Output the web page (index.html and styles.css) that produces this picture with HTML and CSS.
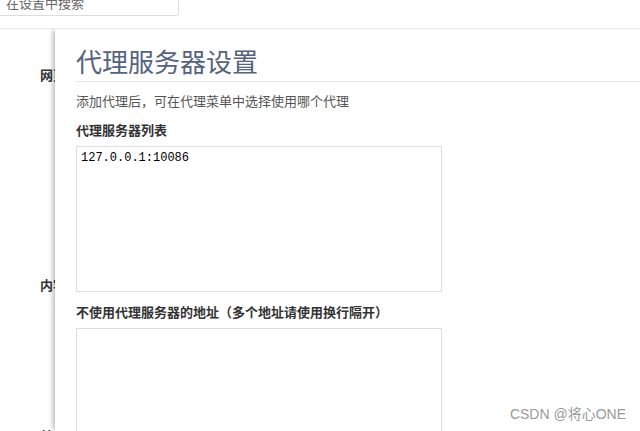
FILE: index.html
```html
<!DOCTYPE html>
<html lang="zh-CN">
<head>
  <meta charset="UTF-8">
  <meta name="viewport" content="width=device-width, initial-scale=1.0">
  <title>代理服务器设置</title>
  <link rel="stylesheet" href="styles.css">
</head>
<body>
  <div class="topbar">
    <div class="search">在设置中搜索</div>
  </div>

  <div class="main">
    <div class="settings">
      <div class="row row-web">网页</div>
      <div class="row row-content">内容</div>
      <div class="row row-more">其他</div>
    </div>

    <div class="dialog">
      <h1>代理服务器设置</h1>
      <p class="desc">添加代理后，可在代理菜单中选择使用哪个代理</p>

      <label class="field-label" for="proxyList">代理服务器列表</label>
      <textarea id="proxyList" class="box box-list">127.0.0.1:10086</textarea>

      <label class="field-label" for="bypassList">不使用代理服务器的地址（多个地址请使用换行隔开）</label>
      <textarea id="bypassList" class="box box-bypass"></textarea>
    </div>

    <div class="watermark">CSDN @将心ONE</div>
  </div>
</body>
</html>
```

FILE: styles.css
```css
html, body {
  margin: 0;
  height: 100%;
  overflow: hidden;
}
body {
  font-family: "Noto Sans CJK SC", "Noto Sans", sans-serif;
  font-size: 13px;
  color: #333;
  background: #fff;
}
.topbar {
  display: flex;
  height: 28px;
  border-bottom: 1px solid #e8e8e8;
}
.search {
  width: 172px;
  height: 24px;
  margin-top: -10px;
  padding-left: 6px;
  line-height: 24px;
  color: #666;
  border: 1px solid #dcdcdc;
  border-left: none;
  border-radius: 0 0 3px 0;
}
.main {
  position: relative;
  height: calc(100% - 29px);
  overflow: hidden;
}
.settings {
  padding: 36px 0 0 40px;
}
.row {
  font-weight: bold;
  line-height: 20px;
}
.row-web {
  height: 210px;
}
.row-content {
  height: 151px;
}
.dialog {
  position: absolute;
  left: 55px;
  top: 0;
  right: 0;
  bottom: 0;
  padding: 14px 0 0 21px;
  background: #fff;
  box-shadow: -3px 0 5px -1px rgba(0,0,0,0.28);
}
h1 {
  margin: 0;
  padding-bottom: 3px;
  font-size: 26px;
  font-weight: normal;
  line-height: 35px;
  color: #54637f;
  border-bottom: 1px solid #e6e6e6;
}
.desc {
  margin: 9px 0 0;
  line-height: 20px;
  color: #555;
}
.field-label {
  display: block;
  margin-top: 9px;
  line-height: 20px;
  font-weight: bold;
  color: #333;
}
.box {
  display: block;
  width: 366px;
  margin-top: 6px;
  padding: 3px 4px;
  box-sizing: border-box;
  border: 1px solid #dedede;
  resize: none;
  font-family: "Liberation Mono", monospace;
  font-size: 12px;
  line-height: 16px;
  color: #000;
  outline: none;
}
.box-list {
  height: 146px;
}
.box-list + .field-label {
  margin-top: 10px;
}
.box-bypass {
  height: 140px;
}
.watermark {
  position: absolute;
  right: 14px;
  bottom: 8px;
  font-family: "Liberation Sans", "Noto Sans CJK SC", sans-serif;
  font-size: 14px;
  color: #9a9a9a;
}
```
